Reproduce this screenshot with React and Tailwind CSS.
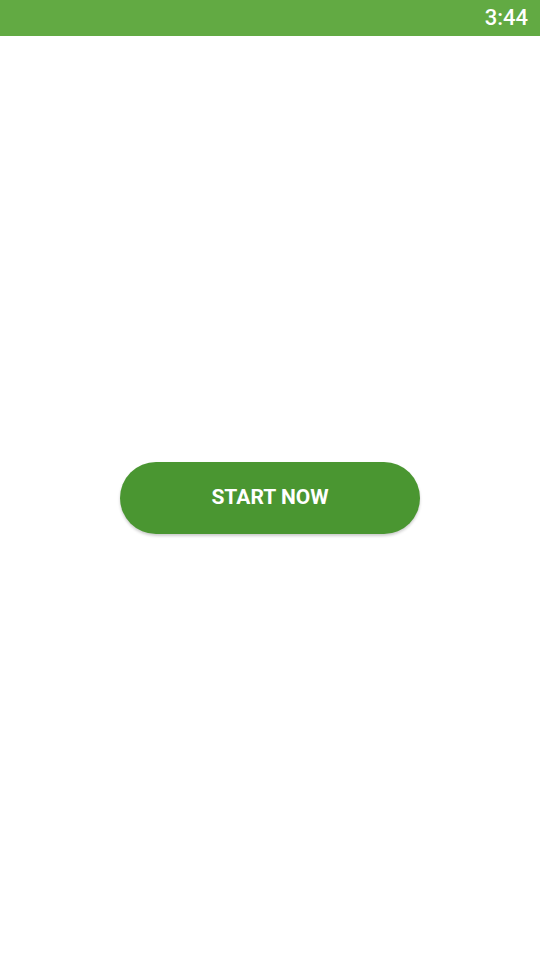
export default function App() {
  return (
    <div className="w-[540px] h-[960px] flex flex-col bg-white" style={{ fontFamily: "Roboto, 'Liberation Sans', sans-serif" }}>
      <div className="h-[36px] bg-[#62aa43] flex items-center justify-end pr-[12px]">
        <span className="text-white text-[22px] font-medium leading-none">3:44</span>
      </div>
      <div className="flex-1 flex items-center justify-center">
        <button className="w-[300px] h-[72px] rounded-full bg-[#4a9631] text-white font-bold text-[21px] shadow-[0_2px_3px_rgba(0,0,0,0.2)]">
          START NOW
        </button>
      </div>
    </div>
  );
}
